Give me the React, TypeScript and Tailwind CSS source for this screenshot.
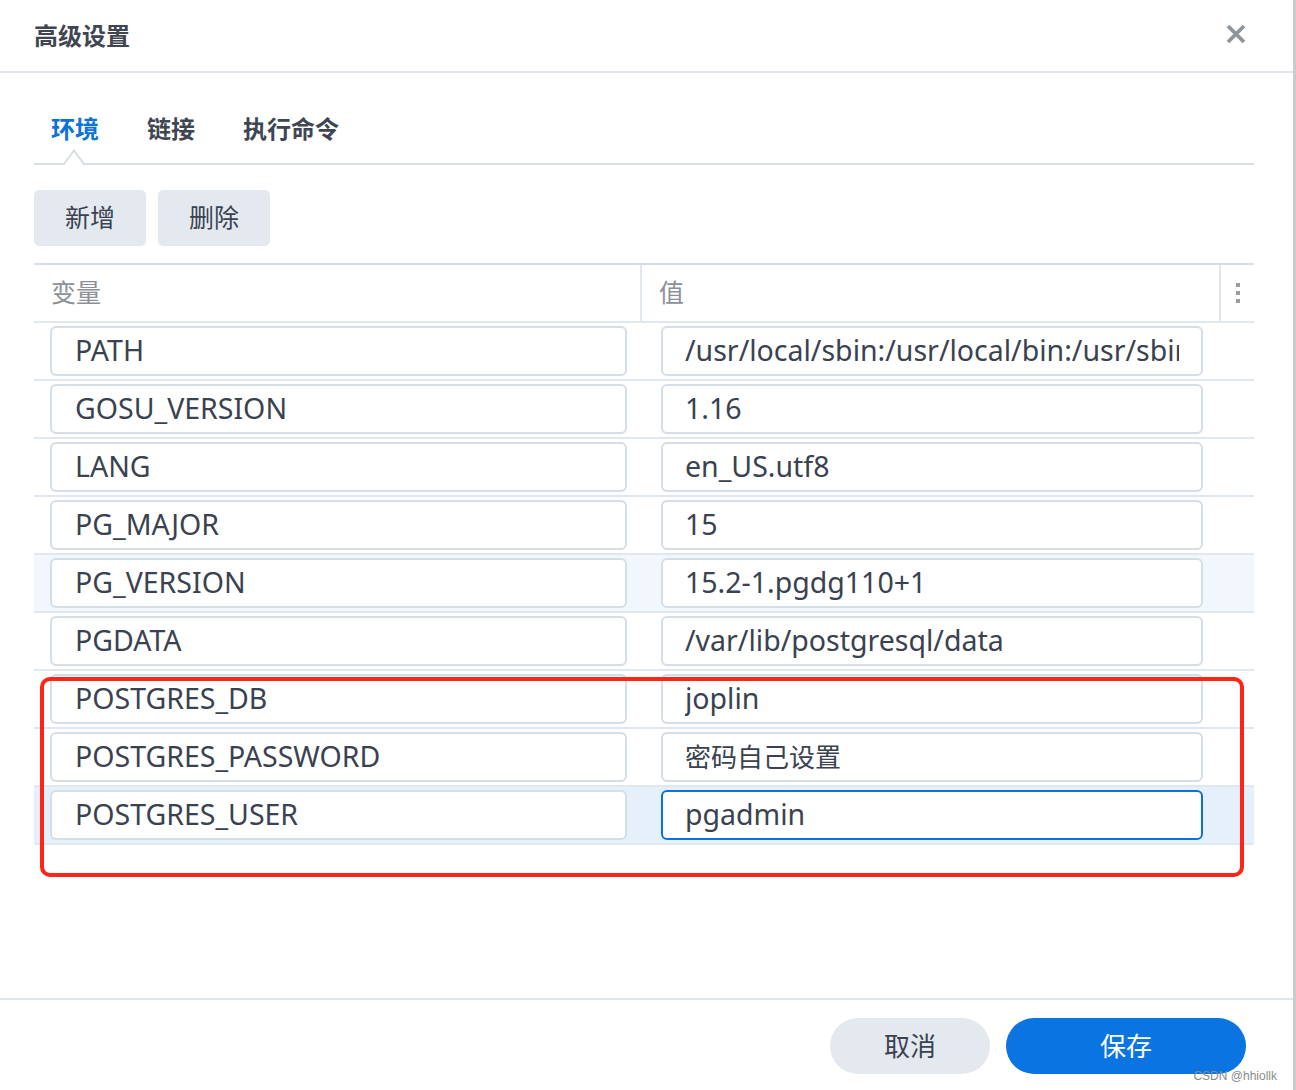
import React from "react";

const rows: { k: string; v: string; bg?: string; focus?: boolean; cjk?: boolean }[] = [
  { k: "PATH", v: "/usr/local/sbin:/usr/local/bin:/usr/sbin:/usr/bin:/sbin:/bin" },
  { k: "GOSU_VERSION", v: "1.16" },
  { k: "LANG", v: "en_US.utf8" },
  { k: "PG_MAJOR", v: "15" },
  { k: "PG_VERSION", v: "15.2-1.pgdg110+1", bg: "light" },
  { k: "PGDATA", v: "/var/lib/postgresql/data" },
  { k: "POSTGRES_DB", v: "joplin" },
  { k: "POSTGRES_PASSWORD", v: "密码自己设置", cjk: true },
  { k: "POSTGRES_USER", v: "pgadmin", bg: "sel", focus: true },
];

const font = { fontFamily: '"Noto Sans", "Noto Sans CJK SC", sans-serif' };

export default function App() {
  return (
    <div className="relative w-[1296px] h-[1090px] bg-white overflow-hidden text-[#3a4250]" style={font}>
      <div className="absolute right-0 top-0 h-full w-[3px] bg-[#c9cbce]" />
      <div className="w-[1293px] h-full flex flex-col">
        {/* Header */}
        <div className="h-[73px] shrink-0 border-b-2 border-[#e0e5eb] flex items-center justify-between pl-[34px] pr-[46px]">
          <div className="text-[24px] font-bold text-[#3f4652] leading-none">高级设置</div>
          <svg width="22" height="22" viewBox="0 0 22 22" className="mt-[-3px]">
            <path d="M3 3 L19 19 M19 3 L3 19" stroke="#8e949b" strokeWidth="3.8" strokeLinecap="butt" />
          </svg>
        </div>

        <div className="pl-[34px] pr-[39px] flex-1 flex flex-col">
          {/* Tabs */}
          <div className="relative h-[92px] border-b-2 border-[#d6dee7] flex items-end pb-[22px]">
            <div className="flex items-center gap-[48px] pl-[17px] text-[24px] font-bold leading-none">
              <span className="text-[#0b72db]">环境</span>
              <span className="text-[#3f4652]">链接</span>
              <span className="text-[#3f4652]">执行命令</span>
            </div>
            <svg className="absolute left-[28px] bottom-[-2px]" width="24" height="16" viewBox="0 0 24 16">
              <path d="M0 15 L2 15 L12 1.5 L22 15 L24 15 L24 16 L0 16 Z" fill="white" />
              <path d="M0 15 L2 15 L12 1.5 L22 15 L24 15" stroke="#d6dee7" strokeWidth="2" fill="none" />
            </svg>
          </div>

          {/* Buttons */}
          <div className="flex gap-[12px] mt-[25px]">
            <button className="w-[112px] h-[56px] rounded-[5px] bg-[#e4e9f0] text-[25px] text-[#3a4250]">新增</button>
            <button className="w-[112px] h-[56px] rounded-[5px] bg-[#e4e9f0] text-[25px] text-[#3a4250]">删除</button>
          </div>

          {/* Table */}
          <div className="relative mt-[17px] border-t-2 border-[#d6dee7]">
            <div className="flex h-[58px] border-b-2 border-[#e1e7ee] text-[25px] text-[#8c9197]">
              <div className="w-[608px] border-r-2 border-[#e1e7ee] flex items-center pl-[17px]">变量</div>
              <div className="w-[579px] border-r-2 border-[#e1e7ee] flex items-center pl-[17px]">值</div>
              <div className="flex-1 flex flex-col items-center justify-center gap-[4px]">
                <span className="w-[4px] h-[4px] bg-[#999da2]" />
                <span className="w-[4px] h-[4px] bg-[#999da2]" />
                <span className="w-[4px] h-[4px] bg-[#999da2]" />
              </div>
            </div>
            {rows.map((r) => (
              <div
                key={r.k}
                className={
                  "flex items-center h-[58px] border-b-2 border-[#e1e7ee] " +
                  (r.bg === "light" ? "bg-[#f2f7fd]" : r.bg === "sel" ? "bg-[#e6f0fb]" : "bg-white")
                }
              >
                <div className="w-[608px] pl-[16px] pr-[15px]">
                  <div className="h-[50px] rounded-[6px] border-2 border-[#d5dde6] bg-white flex items-center pl-[23px] text-[28.5px] leading-[1.4] whitespace-nowrap overflow-hidden">
                    {r.k}
                  </div>
                </div>
                <div className="pl-[19px]">
                  <div
                    className={
                      "w-[542px] h-[50px] rounded-[6px] border-2 bg-white flex items-center pl-[22px] pr-[22px] leading-[1.4] whitespace-nowrap overflow-hidden " +
                      (r.cjk ? "text-[26px] " : "text-[28.5px] ") +
                      (r.focus ? "border-[#0b72db]" : "border-[#d5dde6]")
                    }
                  >
                    <span className="overflow-hidden block">{r.v}</span>
                  </div>
                </div>
              </div>
            ))}
            <div className="absolute left-[6px] top-[412px] w-[1204px] h-[200px] rounded-[10px] border-[4px] border-[#ff2418] pointer-events-none" />
          </div>
        </div>

        {/* Footer */}
        <div className="h-[92px] shrink-0 border-t-2 border-[#e0e5eb] flex items-start justify-end gap-[16px] pr-[47px] pt-[18px] relative">
          <button className="w-[160px] h-[56px] rounded-full bg-[#e4e9f0] text-[26px] text-[#3a4250]">取消</button>
          <button className="w-[240px] h-[56px] rounded-full bg-[#0a74e0] text-[26px] text-white">保存</button>
          <div className="absolute right-[16px] top-[67px] text-[12px] text-[#8a8a8a]" style={{ fontFamily: '"Liberation Sans", sans-serif' }}>
            CSDN @hhiollk
          </div>
        </div>
      </div>
    </div>
  );
}
